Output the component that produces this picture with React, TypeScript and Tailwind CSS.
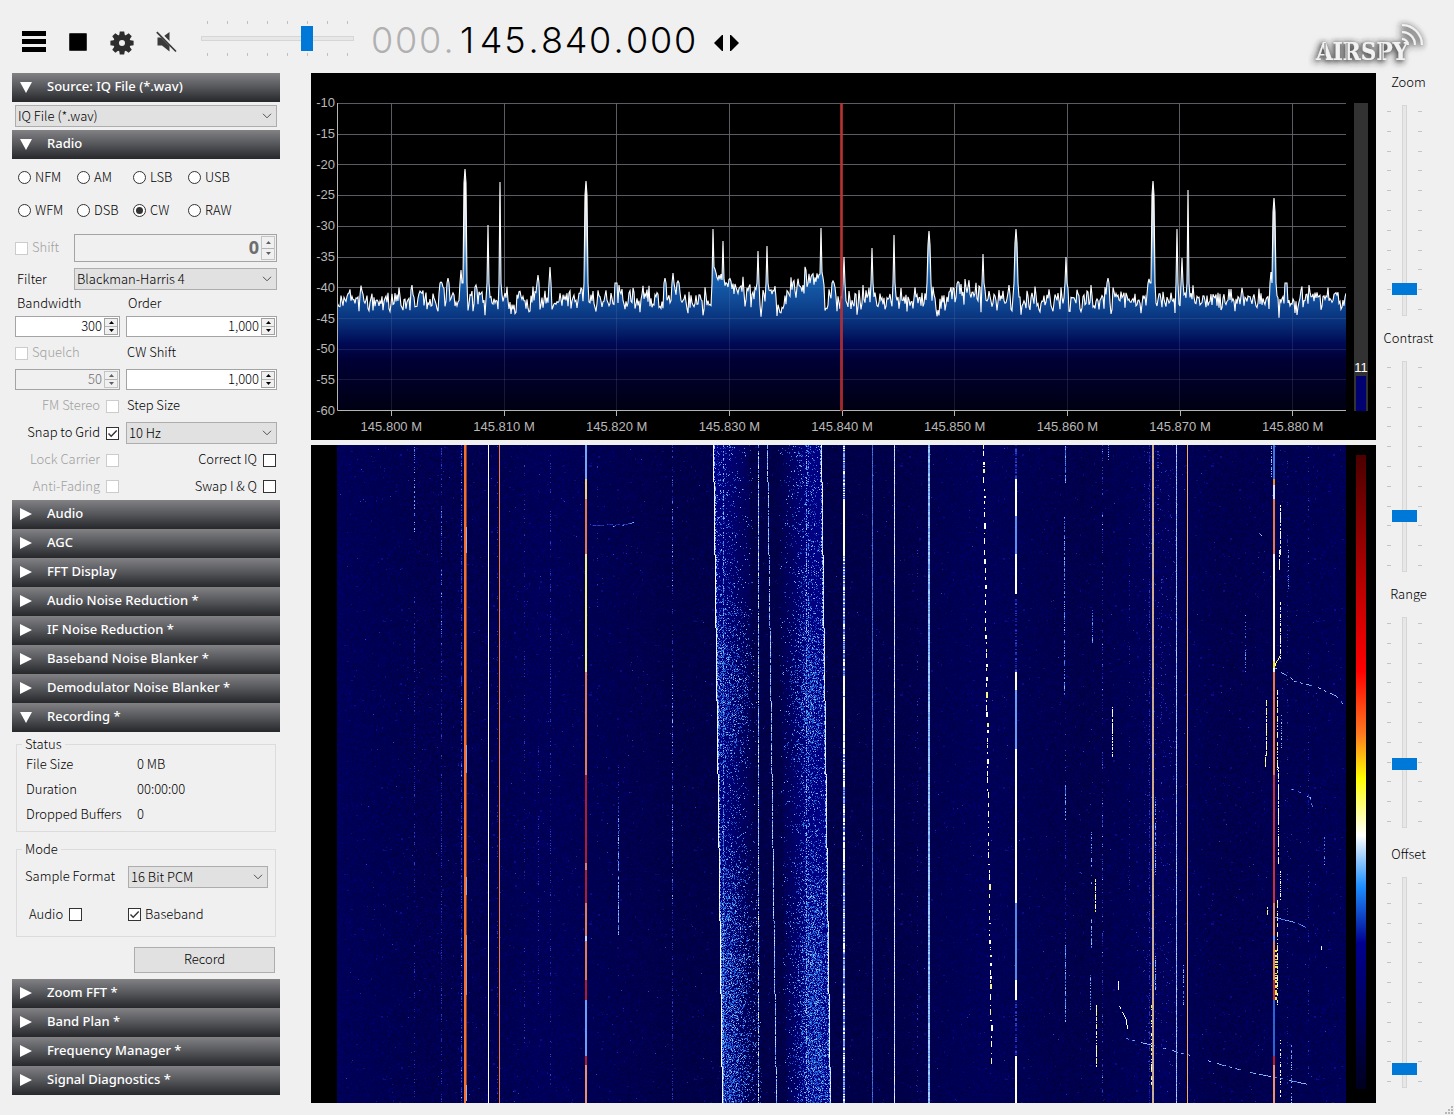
import type { ReactNode } from "react";

const UI = "font-['Noto_Sans_CJK_JP','Noto_Sans',sans-serif]";

function seeded(seed: number) {
  let s = seed;
  return () => {
    s = (s + 0x6d2b79f5) | 0;
    let t = Math.imul(s ^ (s >>> 15), 1 | s);
    t = (t + Math.imul(t ^ (t >>> 7), 61 | t)) ^ t;
    return ((t ^ (t >>> 14)) >>> 0) / 4294967296;
  };
}

/* ---------- Spectrum trace ---------- */

const PLOT_W = 1009;
const PLOT_H = 308;
const GRID_X = [54, 167, 279, 392, 504, 617, 730, 842, 955];
const GRID_Y = [0, 31, 61, 92, 123, 154, 184, 215, 246, 276];

// [x, top, half width]
const PEAKS: [number, number, number][] = [
  [104, 179, 1], [111, 175, 1], [124, 167, 1], [128, 66, 2], [151, 122, 1], [163, 79, 1],
  [201, 172, 1], [213, 164, 1], [249, 78, 2], [279, 180, 1], [328, 175, 1], [336, 170, 1], [341, 178, 1],
  [376, 126, 1], [386, 138, 1], [421, 148, 1], [430, 143, 1], [484, 125, 1], [496, 178, 1], [507, 154, 1],
  [535, 145, 1], [557, 132, 1], [592, 128, 2], [646, 151, 1], [679, 126, 2], [729, 154, 1],
  [771, 175, 1], [812, 176, 1], [816, 78, 2], [840, 126, 1], [845, 155, 1], [851, 87, 1],
  [934, 169, 1], [937, 95, 2], [949, 180, 1],
];

function floorAt(x: number) {
  if (x < 375) return 197;
  if (x < 388) return 174;
  if (x < 426) return 178 + (x - 387) * 0.55;
  if (x < 446) return 198;
  if (x < 473) return 196 - (x - 445) * 0.75;
  if (x < 486) return 172;
  if (x < 488) return 180;
  if (x > 608 && x < 640) return 191;
  return 197;
}

function buildTrace() {
  const rnd = seeded(41);
  const ys: number[] = [];
  for (let x = 0; x <= PLOT_W; x++) {
    const n = rnd() + rnd() - 1;
    let y = floorAt(x) + n * 19;
    if (x % 2 === 1) y = y * 0.65 + (ys[x - 1] ?? y) * 0.35;
    ys.push(Math.max(floorAt(x) - 15, Math.min(y, 216)));
  }
  for (const [px, top, half] of PEAKS) {
    ys[px] = top;
    for (let k = 1; k <= half; k++) {
      const y = half === 2 && k === 1 ? top + 14 : 180;
      ys[px - k] = Math.min(ys[px - k], Math.max(y, top));
      ys[px + k] = Math.min(ys[px + k], Math.max(y, top));
    }
  }
  return ys.map((y, x) => `${x} ${y.toFixed(1)}`).join("L");
}

const TRACE = buildTrace();

function SpectrumPlot() {
  const grid = [...GRID_X.map((x) => `M${x + 0.5} 0V${PLOT_H - 1}`), ...GRID_Y.map((y) => `M0 ${y + 0.5}H${PLOT_W}`)].join("");
  return (
    <svg viewBox={`0 0 ${PLOT_W} ${PLOT_H}`} preserveAspectRatio="none" className="block h-full w-full">
      <defs>
        <linearGradient id="level" gradientUnits="userSpaceOnUse" x1="0" y1="0" x2="0" y2={PLOT_H}>
          <stop offset="0.3" stopColor="#ffffff" />
          <stop offset="0.43" stopColor="#b4c8dc" />
          <stop offset="0.51" stopColor="#4a8ccc" />
          <stop offset="0.57" stopColor="#155fae" />
          <stop offset="0.64" stopColor="#104a96" />
          <stop offset="0.71" stopColor="#08307a" />
          <stop offset="0.78" stopColor="#000a55" />
          <stop offset="0.83" stopColor="#000036" />
          <stop offset="0.9" stopColor="#000028" />
          <stop offset="1" stopColor="#000012" />
        </linearGradient>
      </defs>
      <path d={grid} stroke="#505050" fill="none" />
      <path d={`M0 ${PLOT_H}L${TRACE}L${PLOT_W} ${PLOT_H}Z`} fill="url(#level)" />
      <path d={grid} stroke="#8c9cc8" strokeOpacity="0.16" fill="none" />
      <path d={`M${TRACE}`} stroke="#ffffff" strokeWidth="1.1" fill="none" />
      <path d={`M0.5 0V${PLOT_H - 0.5}H${PLOT_W}`} stroke="#b4b4b4" fill="none" />
      <path d={`M504.5 0V${PLOT_H}`} stroke="#c03030" strokeOpacity="0.8" strokeWidth="3" />
    </svg>
  );
}

/* ---------- Waterfall ---------- */

const FALL_W = 1009;
const FALL_H = 658;

type Marks = Record<string, string[]>;

function put(m: Marks, color: string, x: number, y: number, w = 1, h = 1) {
  (m[color] ??= []).push(`M${Math.round(x)} ${Math.round(y)}h${w}v${h}h${-w}z`);
}

function MarkLayer({ marks }: { marks: Marks }) {
  return (
    <>
      {Object.entries(marks).map(([color, d]) => (
        <path key={color} d={d.join("")} fill={color} />
      ))}
    </>
  );
}

const TILE_W = 311;
const TILE_H = 229;

function buildTile() {
  const rnd = seeded(7);
  const m: Marks = {};
  for (let i = 0; i < 20000; i++) {
    const r = rnd();
    const color = r < 0.5 ? "#000040" : r < 0.9 ? "#000064" : r < 0.988 ? "#000078" : "#101094";
    put(m, color, rnd() * (TILE_W - 2), rnd() * (TILE_H - 2), rnd() < 0.35 ? 2 : 1, rnd() < 0.2 ? 2 : 1);
  }
  return m;
}

const COOL = ["#2a62d8", "#4a8af0", "#8cbcff"];
const PALE = ["#ffffff", "#d8e8ff", "#ffffe0"];
const WARM = ["#ffffff", "#ffff9a", "#e8e860"];
const DIM = ["#1c2ca8", "#2a44c4", "#1414a0"];
const SKY = ["#5c9af0", "#a8ccff", "#3c78e0", "#80b4ff"];

// [x, top, bottom, density, palette, width]
const STREAKS: [number, number, number, number, string[], number][] = [
  [77, 0, 90, 0.4, COOL, 1], [77, 150, 460, 0.3, DIM, 1], [77, 500, 658, 0.25, DIM, 1],
  [104, 0, 658, 0.35, DIM, 1], [104, 60, 200, 0.2, COOL, 1], [124, 0, 658, 0.55, DIM, 1], [124, 0, 658, 0.2, COOL, 1],
  [160, 0, 658, 0.12, DIM, 1], [187, 20, 600, 0.16, DIM, 1], [201, 300, 560, 0.25, DIM, 1], [213, 10, 640, 0.28, DIM, 1],
  [281, 320, 370, 0.4, DIM, 1], [281, 370, 445, 0.75, COOL, 1], [281, 445, 490, 0.8, SKY, 1],
  [260, 0, 400, 0.08, DIM, 1], [335, 0, 658, 0.35, DIM, 1], [335, 30, 150, 0.2, COOL, 1], [335, 220, 460, 0.35, COOL, 1],
  [386, 0, 658, 0.6, COOL, 1], [421, 0, 658, 0.85, SKY, 1], [421, 0, 658, 0.2, PALE, 1],
  [471, 0, 658, 0.3, COOL, 1], [535, 0, 658, 1, ["#3468cc", "#4a80e0", "#2a58c0"], 1],
  [557, 0, 658, 1, ["#c8dcff", "#a8c8ff", "#e8f0ff"], 1], [580, 60, 658, 0.1, DIM, 1],
  [591, 0, 658, 1, ["#70a8f0", "#8cc0ff", "#a8d0ff"], 2],
  [728, 0, 38, 0.95, COOL, 1], [727, 70, 250, 0.6, COOL, 1], [728, 260, 340, 0.2, DIM, 1], [728, 340, 375, 0.85, COOL, 1],
  [728, 380, 500, 0.3, DIM, 1], [728, 500, 578, 0.85, COOL, 1],
  [765, 0, 658, 0.28, DIM, 1], [765, 0, 658, 0.05, COOL, 1], [775, 262, 312, 0.7, PALE, 1],
  [755, 165, 200, 0.5, COOL, 1], [754, 385, 440, 0.4, COOL, 1], [754, 470, 505, 0.6, SKY, 1], [753, 530, 565, 0.5, COOL, 1],
  [758, 434, 468, 0.75, WARM, 1], [759, 560, 622, 0.75, WARM, 1], [771, 0, 15, 0.6, COOL, 1],
  [792, 60, 460, 0.1, DIM, 1], [812, 0, 658, 0.4, DIM, 1], [820, 0, 65, 0.2, DIM, 2], [824, 130, 300, 0.15, DIM, 1],
  [815, 0, 658, 1, ["#d8a878", "#c8a890", "#e0a870"], 1], [816, 0, 658, 1, ["#b8a898", "#a0b4dc", "#d0b090"], 1],
  [818, 350, 430, 0.6, COOL, 1], [818, 510, 545, 0.75, SKY, 1], [814, 560, 640, 0.4, WARM, 1],
  [839, 0, 658, 1, ["#8cb4f0", "#b8d0ff", "#6c9ce8"], 1], [846, 520, 560, 0.6, SKY, 1],
  [908, 170, 230, 0.35, COOL, 1], [929, 255, 312, 0.85, WARM, 1], [928, 310, 322, 0.9, WARM, 1], [930, 462, 470, 0.9, WARM, 1],
  [934, 0, 34, 0.6, SKY, 1], [943, 60, 110, 0.85, PALE, 1], [942, 105, 125, 0.8, PALE, 1], [943, 157, 215, 0.7, PALE, 1],
  [940, 245, 325, 0.65, WARM, 1], [944, 270, 312, 0.4, SKY, 1], [941, 320, 420, 0.7, PALE, 1],
  [940, 455, 560, 0.6, WARM, 1], [943, 425, 455, 0.6, PALE, 1], [938, 505, 555, 0.55, ["#f0f040", "#ffe020"], 2],
  [943, 595, 658, 0.45, PALE, 1], [951, 105, 145, 0.4, COOL, 1], [954, 600, 658, 0.45, SKY, 1],
  [971, 0, 658, 0.14, DIM, 1], [987, 390, 420, 0.35, COOL, 1], [950, 0, 640, 0.12, DIM, 1], [984, 500, 505, 0.9, PALE, 1],
];

// [x at top, x at bottom, last row, density, palette]
const DRIFTS: [number, number, number, number, string[]][] = [
  [376, 385, 658, 1, ["#ffffff", "#d0e4ff", "#ffffff"]],
  [377, 386, 658, 0.5, SKY],
  [430, 439, 658, 0.9, ["#80b4ff", "#c8dcff", "#5c94f0"]],
  [484, 493, 658, 1, ["#ffffff", "#d0e4ff", "#a0c8ff"]],
  [483, 492, 658, 0.5, SKY],
];

const CURVES: { pts: [number, number][]; density: number; colors: string[] }[] = [
  { pts: [[943, 210], [940, 215], [938, 218], [937, 222]], density: 0.9, colors: WARM },
  { pts: [[937, 222], [944, 227], [953, 232], [957, 236], [978, 241], [998, 250], [1009, 262]], density: 0.6, colors: SKY },
  { pts: [[942, 339], [958, 345], [973, 352], [975, 362]], density: 0.5, colors: COOL },
  { pts: [[938, 472], [958, 477], [969, 482]], density: 0.8, colors: COOL },
  { pts: [[916, 83], [925, 91]], density: 0.7, colors: SKY },
  { pts: [[789, 593], [823, 602], [853, 610], [883, 619], [913, 627], [943, 633], [971, 639]], density: 0.5, colors: SKY },
  { pts: [[782, 561], [789, 575], [790, 585]], density: 0.6, colors: PALE },
  { pts: [[781, 533], [781, 548]], density: 0.4, colors: PALE },
  { pts: [[742, 427], [780, 438], [795, 445]], density: 0.25, colors: DIM },
  { pts: [[255, 78], [270, 81], [285, 80], [300, 76]], density: 0.45, colors: COOL },
  { pts: [[255, 80], [280, 79], [300, 78]], density: 0.5, colors: DIM },
];

const GRAIN = ["#1848c8", "#2468d8", "#3c88e8", "#1030b0", "#1c58d0", "#80b8ff"];

function buildFall() {
  const rnd = seeded(1234);
  const pick = (list: string[]) => list[Math.floor(rnd() * list.length)];
  const m: Marks = {};

  for (let y = 0; y < FALL_H; y++) {
    const t = y / FALL_H;
    const a = Math.exp(-(((y - 245) / 65) ** 2));
    const b = 1 / (1 + Math.exp(-(y - 440) / 25));
    const dense = 0.12 + 0.36 * a + 0.42 * b;
    const left = 376 + 9 * t;
    for (let k = 1; k < 40; k++) {
      if (rnd() < dense * Math.exp(-((k / 26) ** 2)) * 1.15) put(m, pick(GRAIN), left + k, y);
    }
    const right = 484 + 9 * t;
    for (let k = 1; k < 46; k++) {
      const hump = Math.exp(-(((k - 14) / 15) ** 2));
      if (rnd() < dense * hump * 1.05 + 0.02) put(m, pick(GRAIN), right - k, y);
    }
    if (rnd() < 0.5) put(m, pick(SKY), 469, y);
  }

  for (const [x, top, bottom, density, colors, w] of STREAKS) {
    for (let y = top; y < bottom; y++) {
      if (rnd() < density) put(m, pick(colors), x, y, w);
    }
  }

  for (const [x0, x1, last, density, colors] of DRIFTS) {
    for (let y = 0; y < last; y++) {
      if (rnd() < density) put(m, pick(colors), x0 + (x1 - x0) * (y / last), y);
    }
  }

  let y = 0;
  while (y < 614) {
    const on = 1 + Math.floor(rnd() * 6);
    const color = pick(["#ffffff", "#ffffff", "#fffff0", "#f4f490"]);
    put(m, color, 646 + 8 * (y / 614), y, rnd() < 0.3 ? 2 : 1, on);
    y += on + 1 + Math.floor(rnd() * 6);
  }

  for (let row = 0; row < FALL_H; row++) {
    const solid = (row > 54 && row < 110) || (row > 230 && row < 310);
    const dense = solid ? 0.95 : row > 310 && row < 430 ? 0.6 : 0.3;
    put(m, rnd() < dense ? "#fffff0" : pick(["#6c9cf0", "#3c64c8", "#8cb0f8"]), 506, row, 2);
    if (rnd() < 0.6) put(m, pick(DIM), 678, row, 2);
  }

  for (const { pts, density, colors } of CURVES) {
    for (let i = 1; i < pts.length; i++) {
      const [x0, y0] = pts[i - 1];
      const [x1, y1] = pts[i];
      const n = Math.max(Math.abs(x1 - x0), Math.abs(y1 - y0));
      let on = true;
      for (let k = 0; k < n; k++) {
        if (k % 3 === 0) on = rnd() < density;
        if (on) put(m, pick(colors), x0 + ((x1 - x0) * k) / n, y0 + ((y1 - y0) * k) / n);
      }
    }
  }

  for (let i = 0; i < 450; i++) put(m, pick(DIM), 806 + rnd() * 34, rnd() * 620);
  for (let i = 0; i < 600; i++) put(m, pick(DIM), rnd() * 1000, rnd() * 656);
  return m;
}

const TILE = buildTile();
const FALL = buildFall();

// [x, top, bottom, color, width]
const SOLIDS: [number, number, number, string, number][] = [
  [127, 0, 658, "#f4702c", 2], [129, 82, 108, "#b8a8b8", 1], [129, 300, 328, "#a8a0c0", 1], [129, 432, 450, "#a8a0c0", 1],
  [129, 490, 550, "#b89090", 1], [129, 640, 656, "#a8b0d0", 1],
  [129, 0, 82, "#80402c", 1], [129, 108, 300, "#80402c", 1], [129, 328, 432, "#80402c", 1], [129, 450, 490, "#80402c", 1], [129, 550, 640, "#80402c", 1],
  [151, 0, 658, "#ffffff", 1], [162, 0, 658, "#f47c40", 1],
  [248, 0, 34, "#74a8f0", 2], [248, 34, 54, "#f0d070", 2], [248, 54, 109, "#e07850", 2], [248, 109, 227, "#f4f080", 2],
  [248, 227, 330, "#e07c58", 2], [248, 330, 418, "#b01c30", 2], [248, 418, 425, "#e08060", 2], [248, 425, 458, "#b01c30", 2],
  [248, 458, 491, "#e07c58", 2], [248, 491, 496, "#c0dcff", 2], [248, 496, 535, "#e07c58", 2], [248, 535, 555, "#b01c30", 2],
  [248, 555, 611, "#6ca0f0", 2], [248, 611, 620, "#b01c30", 2], [248, 620, 658, "#e89070", 2],
  [678, 34, 71, "#ffffff", 2], [678, 71, 109, "#6090e8", 2], [678, 109, 149, "#ffffff", 2], [678, 227, 245, "#ffffe8", 2],
  [678, 245, 304, "#6c9cf0", 2], [678, 304, 458, "#fffff0", 2], [678, 458, 535, "#5c88e0", 2], [678, 535, 555, "#fffff0", 2],
  [678, 611, 658, "#fffff0", 2],
  [850, 0, 658, "#f8b050", 1],
  [936, 0, 34, "#3c78e0", 2], [936, 34, 40, "#f09030", 2], [936, 40, 54, "#d8e0ff", 2], [936, 54, 109, "#e87850", 2],
  [936, 109, 216, "#fff8e0", 2], [936, 216, 223, "#ffe820", 2], [936, 223, 227, "#fff8e0", 2], [936, 227, 330, "#f07848", 2],
  [936, 330, 458, "#c8303c", 2], [936, 458, 491, "#e88858", 2],
  [936, 491, 496, "#6c9cf0", 2], [936, 496, 535, "#e88858", 2], [936, 535, 555, "#c03040", 2], [936, 555, 611, "#2c64d0", 2],
  [936, 611, 620, "#c01c30", 2], [936, 620, 658, "#f09070", 2],
];

function Waterfall() {
  return (
    <svg viewBox={`0 0 ${FALL_W} ${FALL_H}`} preserveAspectRatio="none" shapeRendering="crispEdges" className="block h-full w-full">
      <defs>
        <pattern id="noise" width={TILE_W} height={TILE_H} patternUnits="userSpaceOnUse">
          <rect width={TILE_W} height={TILE_H} fill="#000052" />
          <MarkLayer marks={TILE} />
        </pattern>
        <linearGradient id="hiss" x1="0" x2="1" y1="0" y2="0">
          <stop offset="0" stopColor="#0000a4" stopOpacity="0.7" />
          <stop offset="1" stopColor="#0000a4" stopOpacity="0" />
        </linearGradient>
        <linearGradient id="hissBack" x1="1" x2="0" y1="0" y2="0">
          <stop offset="0" stopColor="#0000a4" stopOpacity="0.65" />
          <stop offset="0.4" stopColor="#0000a4" stopOpacity="0.6" />
          <stop offset="1" stopColor="#0000a4" stopOpacity="0" />
        </linearGradient>
        <linearGradient id="shade" x1="0" x2="1" y1="0" y2="0">
          <stop offset="0" stopColor="#000068" stopOpacity="0.3" />
          <stop offset="0.12" stopColor="#000030" stopOpacity="0.12" />
          <stop offset="0.2" stopColor="#000068" stopOpacity="0.3" />
          <stop offset="0.34" stopColor="#000030" stopOpacity="0.3" />
          <stop offset="0.56" stopColor="#000034" stopOpacity="0.3" />
          <stop offset="0.64" stopColor="#000064" stopOpacity="0.3" />
          <stop offset="0.74" stopColor="#000034" stopOpacity="0.25" />
          <stop offset="0.82" stopColor="#000070" stopOpacity="0.3" />
          <stop offset="0.88" stopColor="#000034" stopOpacity="0.2" />
          <stop offset="1" stopColor="#000060" stopOpacity="0.2" />
        </linearGradient>
      </defs>
      <rect width={FALL_W} height={FALL_H} fill="url(#noise)" />
      <rect width={FALL_W} height={FALL_H} fill="url(#shade)" />
      <path d="M376 0H412L422 658H385Z" fill="url(#hiss)" />
      <path d="M440 0H484L493 658H450Z" fill="url(#hissBack)" />
      <MarkLayer marks={FALL} />
      {SOLIDS.map(([x, top, bottom, color, w], i) => (
        <rect key={i} x={x} y={top} width={w} height={bottom - top} fill={color} />
      ))}
    </svg>
  );
}

/* ---------- Controls ---------- */

function Section({ title, open, children }: { title: string; open?: boolean; children?: ReactNode }) {
  return (
    <section>
      <h2>
        <button
          type="button"
          aria-expanded={!!open}
          className="flex h-[29px] w-full items-center gap-3.5 bg-linear-to-b from-[#828285] via-[#55565a] to-[#27282c] pb-0.5 pl-[7px] text-left font-['Noto_Sans','Open_Sans',sans-serif] text-[13px] font-medium text-white"
        >
          <svg viewBox="0 0 14 14" className="size-3.5 fill-white" aria-hidden="true">
            {open ? <path d="M1 2H13L7 13Z" /> : <path d="M1 1L13 7L1 13Z" />}
          </svg>
          {title}
        </button>
      </h2>
      {children}
    </section>
  );
}

function Select({ id, value, label, className }: { id: string; value: string; label: string; className: string }) {
  return (
    <div className={`relative ${className}`}>
      <select id={id} aria-label={label} className="h-[22px] w-full appearance-none border border-[#adadad] bg-[#e1e1e1] pl-0.5 leading-5">
        <option>{value}</option>
      </select>
      <svg viewBox="0 0 10 6" className="pointer-events-none absolute top-2 right-[5px] h-1.5 w-2.5 fill-none stroke-[#505050]" aria-hidden="true">
        <path d="M1 0.8L5 4.8L9 0.8" />
      </svg>
    </div>
  );
}

function Spin({ label, value, disabled, big }: { label: string; value: string; disabled?: boolean; big?: boolean }) {
  return (
    <div className={`flex items-stretch border border-[#a4a4a4] p-px ${big ? "h-7 flex-1" : "h-[21px]"} ${disabled ? "bg-[#f0f0f0] text-[#6d6d6d]" : "bg-white"}`}>
      <input
        aria-label={label}
        defaultValue={value}
        disabled={disabled}
        className={`w-0 min-w-0 flex-1 bg-transparent pr-0.5 pb-0.5 text-right ${big ? "font-['Open_Sans',sans-serif] text-lg leading-6 font-bold" : "leading-4"}`}
      />
      <div className={`flex w-3.5 flex-col border bg-[#f0f0f0] ${disabled ? "border-[#c4c4c4]" : "border-[#a0a0a0]"}`}>
        <button type="button" aria-label={`Increase ${label}`} disabled={disabled} className="flex flex-1 items-center justify-center border-b border-[#b4b4b4]">
          <svg viewBox="0 0 5 3" className={`h-[3px] w-[5px] ${disabled ? "fill-[#606060]" : "fill-black"}`}><path d="M0 3L2.500 0L5 3Z" /></svg>
        </button>
        <button type="button" aria-label={`Decrease ${label}`} disabled={disabled} className="flex flex-1 items-center justify-center">
          <svg viewBox="0 0 5 3" className={`h-[3px] w-[5px] ${disabled ? "fill-[#606060]" : "fill-black"}`}><path d="M0 0L2.500 3L5 0Z" /></svg>
        </button>
      </div>
    </div>
  );
}

function Check({ label, checked, disabled, after }: { label: string; checked?: boolean; disabled?: boolean; after?: boolean }) {
  return (
    <label className={`flex items-center ${after ? "flex-row-reverse gap-1" : "gap-1.5 pr-px"} ${disabled ? "text-[#a0a0a0]" : ""}`}>
      <span className="pb-0.5">{label}</span>
      <span className="relative size-[13px]">
        <input
          type="checkbox"
          defaultChecked={checked}
          disabled={disabled}
          className="peer block size-[13px] appearance-none border border-[#333333] bg-white disabled:border-[#cccccc]"
        />
        <svg viewBox="0 0 13 13" className="pointer-events-none absolute inset-0 hidden fill-none stroke-[#333333] stroke-[1.4] peer-checked:block" aria-hidden="true">
          <path d="M2.500 6.500L5.200 9.300L10.700 3.500" />
        </svg>
      </span>
    </label>
  );
}

function Mode({ name, checked }: { name: string; checked?: boolean }) {
  return (
    <label className="flex items-center gap-1">
      <span className="relative size-[13px]">
        <input type="radio" name="mode" defaultChecked={checked} className="peer block size-[13px] appearance-none rounded-full border border-[#333333] bg-white" />
        <span className="pointer-events-none absolute inset-[3px] hidden rounded-full bg-[#333333] peer-checked:block" />
      </span>
      <span className="pb-0.5">{name}</span>
    </label>
  );
}

function VSlider({ label, value }: { label: string; value: number }) {
  const ticks = Array.from({ length: 11 }, (_, i) => <span key={i} className="h-px w-1 bg-[#c4c4c4]" />);
  return (
    <div className="flex flex-col items-center">
      <label htmlFor={label} className="leading-5">{label}</label>
      <div className="mt-[13px] mr-2 flex h-[211px] w-[35px] justify-between">
        <div className="flex flex-col justify-between py-1.5">{ticks}</div>
        <input
          id={label}
          type="range"
          min={0}
          max={100}
          defaultValue={value}
          className="h-full w-[25px] appearance-none bg-transparent [direction:rtl] [writing-mode:vertical-lr] [&::-webkit-slider-runnable-track]:w-[5px] [&::-webkit-slider-runnable-track]:border [&::-webkit-slider-runnable-track]:border-[#d6d6d6] [&::-webkit-slider-runnable-track]:bg-[#e7e7e7] [&::-webkit-slider-thumb]:-ml-[11px] [&::-webkit-slider-thumb]:h-3 [&::-webkit-slider-thumb]:w-[25px] [&::-webkit-slider-thumb]:appearance-none [&::-webkit-slider-thumb]:bg-[#0078d7]"
        />
        <div className="flex flex-col justify-between py-1.5">{ticks}</div>
      </div>
    </div>
  );
}

function Volume() {
  const ticks = Array.from({ length: 8 }, (_, i) => <span key={i} className="h-[3px] w-px bg-[#c0c0c0]" />);
  return (
    <div className="flex h-[35px] w-[153px] flex-col">
      <div className="flex justify-between px-1.5">{ticks}</div>
      <input
        type="range"
        aria-label="Volume"
        min={0}
        max={7}
        defaultValue={5}
        className="h-[29px] w-full appearance-none bg-transparent [&::-webkit-slider-runnable-track]:h-[5px] [&::-webkit-slider-runnable-track]:border [&::-webkit-slider-runnable-track]:border-[#d6d6d6] [&::-webkit-slider-runnable-track]:bg-[#e7e7e7] [&::-webkit-slider-thumb]:-mt-[11px] [&::-webkit-slider-thumb]:h-[25px] [&::-webkit-slider-thumb]:w-3 [&::-webkit-slider-thumb]:appearance-none [&::-webkit-slider-thumb]:bg-[#0078d7]"
      />
      <div className="flex justify-between px-1.5">{ticks}</div>
    </div>
  );
}

function Frequency() {
  return (
    <div className="flex font-['Inter',sans-serif] text-[36px] leading-none font-light">
      {"000.145.840.000".split("").map((c, i) => (
        <span key={i} className={`text-center ${c === "." ? "w-[13px]" : "w-6"} ${i < 4 ? "text-[#b0b0b0]" : "text-black"}`}>
          {c}
        </span>
      ))}
    </div>
  );
}

function Logo() {
  return (
    <svg viewBox="0 0 120 58" className="h-[58px] w-[120px]" role="img" aria-label="AIRSPY">
      <defs>
        <filter id="halo" x="-20%" y="-40%" width="140%" height="180%">
          <feDropShadow dx="-1" dy="1" stdDeviation="3" floodColor="#303030" floodOpacity="1" />
          <feDropShadow dx="-1" dy="1" stdDeviation="2" floodColor="#606060" floodOpacity="0.7" />
        </filter>
      </defs>
      <g filter="url(#halo)">
        <text x="8" y="46" fontFamily="DejaVu Serif Condensed, DejaVu Serif, serif" fontWeight="700" fontSize="24" fill="#f2f2f2">AIRSPY</text>
        <g fill="none" stroke="#f2f2f2" strokeWidth="2">
          <path d="M94 25A6 6 0 0 1 100 31" />
          <path d="M94 18A13 13 0 0 1 107 31" />
          <path d="M94 11A20 20 0 0 1 114 31" />
        </g>
      </g>
      <path d="M17 29V46M39 29V46M54 29V36M74 29V46" stroke="#8c8c8c" strokeWidth="1.2" />
    </svg>
  );
}

function Toolbar() {
  return (
    <header className="flex h-[73px] items-start pt-[18px] pr-[26px] pl-[22px]">
      <button type="button" aria-label="Menu" className="mt-[13px] flex w-6 flex-col gap-[3px]">
        <span className="h-[5px] w-full bg-black" />
        <span className="h-[5px] w-full bg-black" />
        <span className="h-[5px] w-full bg-black" />
      </button>
      <button type="button" aria-label="Stop" className="mt-[15px] ml-[23px] size-[18px] rounded-[1px] border border-[#333333] bg-black" />
      <button type="button" aria-label="Settings" className="mt-[13px] ml-[23px]">
        <svg viewBox="-12 -12 24 24" className="size-6 fill-[#2d2d2d]" aria-hidden="true">
          {[0, 45, 90, 135, 180, 225, 270, 315].map((a) => (
            <path key={a} d="M-3 -7L-2.200 -11.600H2.200L3 -7Z" transform={`rotate(${a})`} />
          ))}
          <path fillRule="evenodd" d="M0 -8.600A8.600 8.600 0 1 1 0 8.600A8.600 8.600 0 1 1 0 -8.600ZM0 -3A3 3 0 1 0 0 3A3 3 0 1 0 0 -3Z" />
        </svg>
      </button>
      <button type="button" aria-label="Unmute" className="mt-[13px] ml-[22px]">
        <svg viewBox="0 0 22 22" className="h-[22px] w-[22px]" aria-hidden="true">
          <path d="M1.500 6.500H6L13.500 1V20.500L6 14.500H1.500Z" fill="#3a3a3a" />
          <path d="M0.500 -0.500L21 20" stroke="#f0f0f0" strokeWidth="3.500" />
          <path d="M0.800 1.200L20 20.500" stroke="#3a3a3a" strokeWidth="1.700" />
        </svg>
      </button>
      <div className="mt-[3px] ml-[23px]"><Volume /></div>
      <div className="mt-1 ml-4"><Frequency /></div>
      <svg viewBox="0 0 25 16" className="mt-[17px] ml-[17px] h-4 w-[25px] fill-black" aria-hidden="true">
        <path d="M9 0V16H8L0 8L8 0ZM16 0V16H17L25 8L17 0Z" />
      </svg>
      <div className="-mt-1 ml-auto"><Logo /></div>
    </header>
  );
}

function Sidebar() {
  return (
    <aside className="w-[268px] shrink-0">
      <Section title="Source: IQ File (*.wav)" open>
        <Select id="source" label="Source" value="IQ File (*.wav)" className="m-[3px]" />
      </Section>
      <Section title="Radio" open>
        <div className="flex flex-col px-[3px] pt-0.5">
          <div className="grid grid-cols-[59px_56px_55px_1fr] auto-rows-[33px] items-center pl-[3px]">
            <Mode name="NFM" />
            <Mode name="AM" />
            <Mode name="LSB" />
            <Mode name="USB" />
            <Mode name="WFM" />
            <Mode name="DSB" />
            <Mode name="CW" checked />
            <Mode name="RAW" />
          </div>
          <div className="mt-[7px] flex">
            <div className="flex w-[59px] items-center"><Check label="Shift" disabled after /></div>
            <Spin label="Shift" value="0" disabled big />
          </div>
          <div className="mt-1.5 flex items-center">
            <label htmlFor="filter" className="w-[59px] pl-0.5">Filter</label>
            <Select id="filter" label="Filter" value="Blackman-Harris 4" className="flex-1" />
          </div>
          <div className="grid grid-cols-[105px_1fr] items-center gap-x-1.5">
            <span className="pl-0.5 leading-[26px]">Bandwidth</span>
            <span className="pl-0.5 leading-[26px]">Order</span>
            <Spin label="Bandwidth" value="300" />
            <Spin label="Order" value="1,000" />
            <div className="flex h-8 items-center"><Check label="Squelch" disabled after /></div>
            <span className="pb-0.5 pl-px">CW Shift</span>
            <Spin label="Squelch" value="50" disabled />
            <Spin label="CW Shift" value="1,000" />
            <div className="flex h-8 items-center justify-end"><Check label="FM Stereo" disabled /></div>
            <label htmlFor="step" className="pb-0.5 pl-px">Step Size</label>
            <div className="flex justify-end"><Check label="Snap to Grid" checked /></div>
            <Select id="step" label="Step Size" value="10 Hz" className="" />
            <div className="flex h-8 items-center justify-end"><Check label="Lock Carrier" disabled /></div>
            <div className="flex justify-end"><Check label="Correct IQ" /></div>
            <div className="flex h-6 items-start justify-end"><Check label="Anti-Fading" disabled /></div>
            <div className="flex h-6 items-start justify-end"><Check label="Swap I & Q" /></div>
          </div>
        </div>
      </Section>
      <Section title="Audio" />
      <Section title="AGC" />
      <Section title="FFT Display" />
      <Section title="Audio Noise Reduction *" />
      <Section title="IF Noise Reduction *" />
      <Section title="Baseband Noise Blanker *" />
      <Section title="Demodulator Noise Blanker *" />
      <Section title="Recording *" open>
        <div className="px-1 pt-[3px] pb-1.5">
          <fieldset className="h-[97px] border border-[#dcdcdc] px-[9px]">
            <legend className="-ml-1 px-[3px] leading-[18px]">Status</legend>
            <dl className="-mt-0.5 grid grid-cols-[111px_1fr] leading-[25px]">
              <dt>File Size</dt>
              <dd>0 MB</dd>
              <dt>Duration</dt>
              <dd>00:00:00</dd>
              <dt>Dropped Buffers</dt>
              <dd>0</dd>
            </dl>
          </fieldset>
          <fieldset className="mt-2 h-[97px] border border-[#dcdcdc] pr-[7px] pl-2">
            <legend className="-ml-[3px] px-[3px] leading-[18px]">Mode</legend>
            <div className="mt-2 flex items-center">
              <label htmlFor="format" className="w-[103px] pb-0.5">Sample Format</label>
              <Select id="format" label="Sample Format" value="16 Bit PCM" className="flex-1" />
            </div>
            <div className="mt-4 flex items-center pl-1">
              <div className="flex w-[99px]"><Check label="Audio" /></div>
              <Check label="Baseband" checked after />
            </div>
          </fieldset>
          <div className="mt-[10px] flex justify-end pr-px">
            <button type="button" className="h-[26px] w-[141px] border border-[#adadad] bg-[#e1e1e1] pb-0.5">Record</button>
          </div>
        </div>
      </Section>
      <Section title="Zoom FFT *" />
      <Section title="Band Plan *" />
      <Section title="Frequency Manager *" />
      <Section title="Signal Diagnostics *" />
    </aside>
  );
}

const DB = [-10, -15, -20, -25, -30, -35, -40, -45, -50, -55, -60];
const MHZ = ["145.800 M", "145.810 M", "145.820 M", "145.830 M", "145.840 M", "145.850 M", "145.860 M", "145.870 M", "145.880 M"];

export default function App() {
  return (
    <div className={`relative flex min-h-screen flex-col bg-[#f0f0f0] pb-3 text-[13px] font-light text-black ${UI}`}>
      <Toolbar />
      <div className="flex flex-1 pl-3">
        <Sidebar />
        <main className="ml-[31px] flex min-w-0 flex-1 flex-col gap-[5px]">
          <div className="bg-black pt-[30px] pr-2 font-['Liberation_Sans',sans-serif] font-normal text-[#b8b8b8]">
            <div className="flex h-[308px]">
              <div className="-my-2 flex w-6 flex-col justify-between text-right leading-4">
                {DB.map((v) => (
                  <span key={v}>{v}</span>
                ))}
              </div>
              <div className="ml-0.5 min-w-0 flex-1"><SpectrumPlot /></div>
              <div className="relative ml-2 flex w-3.5 flex-col items-center justify-end bg-[#323232]">
                <span className="leading-4 text-white">11</span>
                <span className="h-[35px] w-2.5 bg-[#000070]" />
              </div>
            </div>
            <div className="mr-[19px] ml-6 flex h-[29px]">
              {MHZ.map((f) => (
                <div key={f} className="flex flex-1 flex-col items-center">
                  <span className="h-[5px] w-px bg-[#b4b4b4]" />
                  <span className="mt-[3px] leading-4">{f}</span>
                </div>
              ))}
            </div>
          </div>
          <div className="flex min-h-[658px] flex-1 bg-black">
            <div className="ml-[26px] min-w-0 flex-1"><Waterfall /></div>
            <div className="mt-2.5 mr-2.5 mb-3.5 ml-2.5 w-2.5 bg-[linear-gradient(to_bottom,#4c0000_0%,#ff0000_34%,#ff7a20_44%,#ffff00_51%,#ffffff_60%,#1e90ff_68%,#000090_77%,#000020_100%)]" />
          </div>
        </main>
        <aside className="-mt-px mr-[13px] flex w-[65px] shrink-0 flex-col gap-3">
          <VSlider label="Zoom" value={10} />
          <VSlider label="Contrast" value={25} />
          <VSlider label="Range" value={29} />
          <div className="pt-1">
            <VSlider label="Offset" value={6} />
          </div>
        </aside>
      </div>
      <svg viewBox="0 0 10 10" className="absolute right-0 bottom-0 size-2.5 fill-[#b8b8b8]" aria-hidden="true">
        <path d="M7 1h2v2h-2zM4 4h2v2h-2zM7 4h2v2h-2zM1 7h2v2h-2zM4 7h2v2h-2zM7 7h2v2h-2z" />
      </svg>
    </div>
  );
}
